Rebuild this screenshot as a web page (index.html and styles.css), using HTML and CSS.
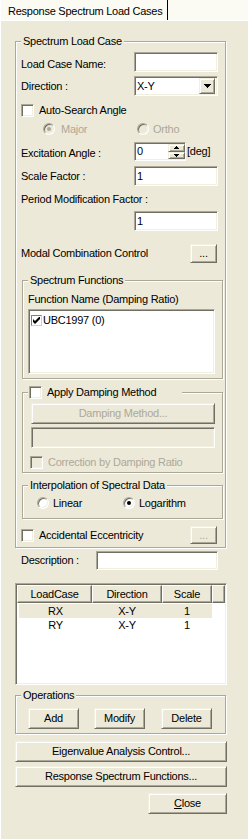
FILE: index.html
```html
<!DOCTYPE html>
<html>
<head>
<meta charset="utf-8">
<link rel="stylesheet" href="styles.css">
</head>
<body>
<div class="tabstrip"><div class="tab">Response Spectrum Load Cases</div></div>
<div class="page">
  <div class="group main">
    <span class="gtitle">Spectrum Load Case</span>
    <div class="row h20 mt10"><span class="lbl down3">Load Case Name:</span><span class="edit ctl"></span></div>
    <div class="row h20 mt4"><span class="lbl">Direction :</span>
      <span class="combo ctl"><span class="combo-text">X-Y</span><span class="combo-btn"><svg width="7" height="4" viewBox="0 0 7 4"><path d="M0 0h7l-3.5 4z" fill="#000"/></svg></span></span>
    </div>
    <div class="row h13 mt8"><span class="chk"></span><span class="chk-lbl">Auto-Search Angle</span></div>
    <div class="row h12 mt6 radios-a">
      <span class="ritem w94"><span class="radio dis on"></span><span class="rlbl g5 distext">Major</span></span>
      <span class="ritem"><span class="radio dis"></span><span class="rlbl g4 distext">Ortho</span></span>
    </div>
    <div class="row h19 mt7"><span class="lbl down2">Excitation Angle :</span>
      <span class="ctlwrap">
        <span class="spin"><span class="spin-text">0</span><span class="spin-btns"><span class="sbtn up"><svg width="5" height="3" viewBox="0 0 5 3"><path d="M2.5 0L5 3H0z" fill="#000"/></svg></span><span class="sbtn dn"><svg width="5" height="3" viewBox="0 0 5 3"><path d="M0 0h5L2.5 3z" fill="#000"/></svg></span></span></span>
        <span class="deg">[deg]</span>
      </span>
    </div>
    <div class="row h20 mt5"><span class="lbl">Scale Factor :</span><span class="edit ctl txt">1</span></div>
    <div class="row h13 mt7"><span class="lbl">Period Modification Factor :</span></div>
    <div class="row h20 mt5"><span class="lbl"></span><span class="edit ctl txt">1</span></div>
    <div class="row h19 mt13"><span class="lbl">Modal Combination Control</span><span class="btn dots">...</span></div>

    <div class="group sub sf">
      <span class="gtitle">Spectrum Functions</span>
      <div class="sublbl">Function Name (Damping Ratio)</div>
      <div class="listbox">
        <div class="litem"><span class="lchk"><svg width="7" height="7" viewBox="0 0 7 7"><path d="M0 2v3l2 2 5-5V-1L2 4z" fill="#000"/></svg></span><span class="ltext">UBC1997 (0)</span></div>
      </div>
    </div>

    <div class="group sub ad">
      <span class="gtitle chktitle"><span class="chk"></span><span class="chk-lbl">Apply Damping Method</span></span>
      <div class="btn dis wbtn">Damping Method...</div>
      <div class="edit dis wbox"></div>
      <div class="row h13 mt8 corr"><span class="chk dis"></span><span class="chk-lbl distext">Correction by Damping Ratio</span></div>
    </div>

    <div class="group sub ip">
      <span class="gtitle">Interpolation of Spectral Data</span>
      <div class="row h12 radios-b">
        <span class="ritem w86"><span class="radio"></span><span class="rlbl g4">Linear</span></span>
        <span class="ritem"><span class="radio on"></span><span class="rlbl g4">Logarithm</span></span>
      </div>
    </div>

    <div class="row h18 mt7"><span class="chk"></span><span class="chk-lbl">Accidental Eccentricity</span><span class="btn dots dis push">...</span></div>
  </div>

  <div class="desc"><span class="lbl">Description :</span><span class="edit dbox"></span></div>

  <div class="listview">
    <div class="lv-head">
      <span class="hcell c1">LoadCase</span>
      <span class="hcell c2">Direction</span>
      <span class="hcell c3">Scale</span>
      <span class="hcell c4"></span>
    </div>
    <div class="lv-row sel first"><span class="cell d1">RX</span><span class="cell d2">X-Y</span><span class="cell d3">1</span></div>
    <div class="lv-row"><span class="cell d1">RY</span><span class="cell d2">X-Y</span><span class="cell d3">1</span></div>
  </div>

  <div class="group ops">
    <span class="gtitle">Operations</span>
    <div class="ops-row">
      <span class="btn obtn">Add</span>
      <span class="btn obtn m15">Modify</span>
      <span class="btn obtn m16">Delete</span>
    </div>
  </div>

  <div class="btn wide mt7">Eigenvalue Analysis Control...</div>
  <div class="btn wide mt4">Response Spectrum Functions...</div>
  <div class="btn close"><span><u>C</u>lose</span></div>
</div>
</body>
</html>
```

FILE: styles.css
```css
* { box-sizing: border-box; }
html, body { margin: 0; padding: 0; }
body {
  width: 248px;
  height: 839px;
  overflow: hidden;
  background: #ece9d8;
  font-family: "Liberation Sans", Arial, sans-serif;
  font-size: 11px;
  line-height: 13px;
  letter-spacing: -0.25px;
  color: #000;
}

.tabstrip { height: 20px; background: #fbfaf3; display: flex; }
.tab {
  width: 168px;
  height: 20px;
  padding: 5px 0 0 7px;
  border-left: 1px solid #fff;
  border-right: 1px solid #000;
  white-space: nowrap;
}

.page {
  height: 819px;
  border-top: 1px solid #fff;
  border-left: 1px solid #fff;
  padding: 20px 0 0 14px;
}

/* etched group box */
.group {
  position: relative;
  border: 1px solid #aca899;
  box-shadow: inset 1px 1px 0 #fff, 1px 1px 0 #fff;
}
.gtitle {
  position: absolute;
  top: -7px;
  left: 5px;
  padding: 0 2px;
  background: #ece9d8;
  white-space: nowrap;
  line-height: 13px;
}
.main { width: 211px; padding-bottom: 3px; }

.row { display: flex; align-items: center; margin: 0 7px 0 5px; }
.h20 { height: 20px; }
.h19 { height: 19px; }
.h18 { height: 18px; }
.h13 { height: 13px; }
.h12 { height: 12px; }
.mt4 { margin-top: 4px; }
.mt5 { margin-top: 5px; }
.mt6 { margin-top: 6px; }
.mt7 { margin-top: 7px; }
.mt8 { margin-top: 8px; }
.mt10 { margin-top: 10px; }
.mt13 { margin-top: 13px; }

.lbl { flex: 1; white-space: nowrap; }
.down3 { padding-top: 5px; }
.down2 { padding-top: 4px; }
.ctl { width: 84px; height: 20px; flex: none; }
.ctlwrap { width: 84px; flex: none; display: flex; align-items: center; }

/* sunken edit */
.edit {
  background: #fff;
  border: 1px solid;
  border-color: #aca899 #fff #fff #aca899;
  box-shadow: inset 1px 1px 0 #716f64, inset -1px -1px 0 #f1efe2;
}
.edit.txt { display: flex; align-items: center; padding-left: 2px; }
.edit.dis { background: #ece9d8; }

.combo {
  display: flex;
  align-items: center;
  background: #fff;
  border: 1px solid;
  border-color: #aca899 #fff #fff #aca899;
  box-shadow: inset 1px 1px 0 #716f64, inset -1px -1px 0 #f1efe2;
  padding: 1px 2px 1px 2px;
}
.combo-text { flex: 1; }
.combo-btn {
  width: 16px;
  height: 16px;
  display: flex;
  align-items: center;
  justify-content: center;
  background: #ece9d8;
  border: 1px solid;
  border-color: #f1efe2 #716f64 #716f64 #f1efe2;
  box-shadow: inset 1px 1px 0 #fff, inset -1px -1px 0 #aca899;
}
.combo-btn svg, .sbtn svg { display: block; shape-rendering: crispEdges; }

.spin {
  width: 52px;
  height: 19px;
  display: flex;
  background: #fff;
  border: 1px solid;
  border-color: #aca899 #fff #fff #aca899;
  box-shadow: inset 1px 1px 0 #716f64, inset -1px -1px 0 #f1efe2;
  padding: 1px 0 1px 1px;
}
.spin-text { flex: 1; display: flex; align-items: center; padding-left: 1px; }
.spin-btns { width: 17px; display: flex; flex-direction: column; }
.sbtn {
  flex: 1;
  display: flex;
  align-items: center;
  justify-content: center;
  background: #ece9d8;
  border: 1px solid;
  border-color: #f1efe2 #716f64 #716f64 #f1efe2;
  box-shadow: inset 1px 1px 0 #fff, inset -1px -1px 0 #aca899;
}
.deg { margin-left: 1px; white-space: nowrap; }

/* checkbox */
.chk {
  width: 13px;
  height: 13px;
  flex: none;
  background: #fff;
  border: 1px solid;
  border-color: #aca899 #fff #fff #aca899;
  box-shadow: inset 1px 1px 0 #716f64, inset -1px -1px 0 #f1efe2;
}
.chk.dis { background: #ece9d8; }
.chk-lbl { margin-left: 5px; white-space: nowrap; }
.distext { color: #aca899; }

/* radio */
.ritem { display: flex; align-items: center; }
.w94 { width: 94px; }
.w86 { width: 86px; }
.radio {
  width: 12px;
  height: 12px;
  flex: none;
  border-radius: 50%;
  background: #fff;
  border: 1px solid;
  border-color: #aca899 #fff #fff #aca899;
  box-shadow: inset 1px 1px 0 #716f64, inset -1px -1px 0 #f1efe2;
  display: flex;
  align-items: center;
  justify-content: center;
}
.radio.dis { background: #ece9d8; }
.radio.on::after {
  content: "";
  width: 4px;
  height: 4px;
  border-radius: 50%;
  background: #000;
}
.radio.dis.on::after { background: #aca899; }
.rlbl { white-space: nowrap; }
.g5 { margin-left: 6px; }
.g4 { margin-left: 4px; }
.radios-a { padding-left: 22px; }
.radios-b { margin: 11px 0 0 14px; }

/* raised button */
.btn {
  display: flex;
  align-items: center;
  justify-content: center;
  background: #ece9d8;
  border: 1px solid;
  border-color: #f1efe2 #716f64 #716f64 #f1efe2;
  box-shadow: inset 1px 1px 0 #fff, inset -1px -1px 0 #aca899;
  white-space: nowrap;
}
.btn.dis { color: #aca899; }
.dots { width: 27px; height: 19px; flex: none; margin-right: 1px; }
.h18 .dots { height: 18px; }
.push { margin-left: auto; }

/* sub groups */
.sub { margin-left: 6px; width: 201px; }
.sf { margin-top: 17px; padding-bottom: 4px; }
.sublbl { margin: 12px 0 0 5px; white-space: nowrap; }
.listbox {
  margin: 3px 0 0 5px;
  width: 187px;
  height: 65px;
  background: #fff;
  border: 1px solid;
  border-color: #aca899 #fff #fff #aca899;
  box-shadow: inset 1px 1px 0 #716f64, inset -1px -1px 0 #f1efe2;
  padding: 1px;
}
.litem { display: flex; align-items: center; height: 13px; margin: 3px 0 0 1px; }
.lchk {
  width: 11px;
  height: 11px;
  flex: none;
  display: flex;
  align-items: center;
  justify-content: center;
  background: #fff;
  border: 1px solid;
  border-color: #808080 #d4d0c8 #d4d0c8 #808080;
}
.lchk svg { display: block; }
.ltext { margin-left: 1px; white-space: nowrap; }

.ad { margin-top: 13px; padding-bottom: 3px; }
.chktitle {
  display: flex;
  align-items: center;
  height: 13px;
  width: 154px;
  padding: 0 0 0 1px;
}
.wbtn { margin: 10px 0 0 8px; width: 184px; height: 21px; }
.wbox { margin: 3px 0 0 8px; width: 184px; height: 21px; }
.corr { margin-left: 7px; }

.ip { margin-top: 12px; padding-bottom: 9px; }

/* description */
.desc { display: flex; align-items: center; width: 197px; height: 19px; margin: 3px 0 0 6px; }
.dbox { width: 122px; height: 19px; flex: none; }

/* list view */
.listview {
  margin-top: 13px;
  width: 212px;
  height: 102px;
  background: #fff;
  border: 1px solid;
  border-color: #aca899 #fff #fff #aca899;
  box-shadow: inset 1px 1px 0 #716f64, inset -1px -1px 0 #f1efe2;
  padding: 1px;
}
.lv-head { display: flex; height: 18px; }
.hcell {
  height: 18px;
  display: flex;
  align-items: center;
  justify-content: center;
  background: #ece9d8;
  border: 1px solid;
  border-color: #fff #716f64 #716f64 #fff;
  box-shadow: inset -1px -1px 0 #aca899;
  white-space: nowrap;
}
.c1 { width: 75px; }
.c2 { width: 70px; }
.c3 { width: 50px; }
.c4 { flex: 1; }
.lv-row { display: flex; height: 14px; line-height: 14px; margin-left: 2px; width: 193px; }
.lv-row.first { margin-top: 1px; }
.lv-row.sel { background: #ece9d8; }
.cell { text-align: center; white-space: nowrap; }
.d1 { width: 73px; }
.d2 { width: 70px; }
.d3 { width: 50px; }

/* operations */
.ops { margin-top: 10px; width: 211px; padding: 12px 0 4px 0; }
.ops-row { display: flex; margin-left: 12px; }
.obtn { width: 51px; height: 21px; }
.m15 { margin-left: 15px; }
.m16 { margin-left: 16px; }

.wide { width: 212px; height: 21px; }
.close { width: 79px; height: 21px; margin: 6px 0 0 133px; }
```
